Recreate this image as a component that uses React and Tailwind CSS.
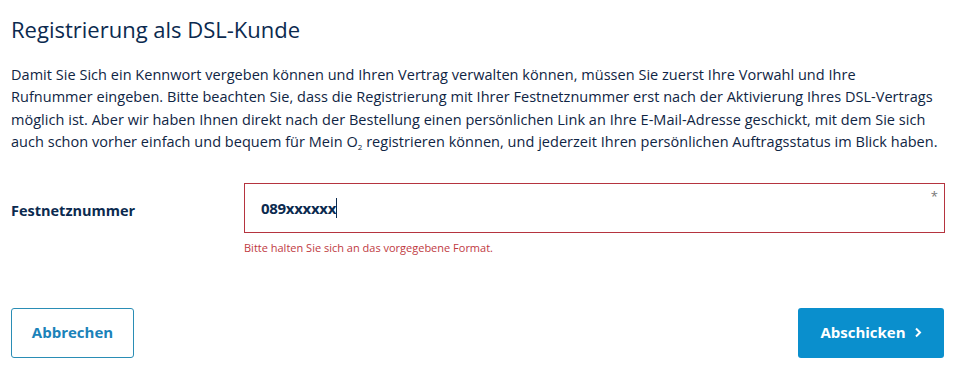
export default function App() {
  return (
    <div className="w-[964px] h-[385px] bg-white px-[11px] pt-[14px]" style={{ fontFamily: '"Open Sans", "Noto Sans", sans-serif' }}>
      <h1 className="text-[22px] leading-[30px] text-[#0b2a4f] font-normal">Registrierung als DSL-Kunde</h1>
      <p className="mt-[20px] text-[14.5px] leading-[22.3px] text-[#0f2544] tracking-[0.03px] pr-[0px]">
        Damit Sie Sich ein Kennwort vergeben können und Ihren Vertrag verwalten können, müssen Sie zuerst Ihre Vorwahl und Ihre<br />
        Rufnummer eingeben. Bitte beachten Sie, dass die Registrierung mit Ihrer Festnetznummer erst nach der Aktivierung Ihres DSL-Vertrags<br />
        möglich ist. Aber wir haben Ihnen direkt nach der Bestellung einen persönlichen Link an Ihre E-Mail-Adresse geschickt, mit dem Sie sich<br />
        auch schon vorher einfach und bequem für Mein O<sub className="text-[8px] align-baseline relative top-[3px]">2</sub> registrieren können, und jederzeit Ihren persönlichen Auftragsstatus im Blick haben.
      </p>
      <div className="mt-[30px] flex items-start">
        <div className="w-[233px] shrink-0 pt-[17px] text-[14.5px] font-bold text-[#0b2a4f]">Festnetznummer</div>
        <div className="w-[701px]">
          <div className="relative h-[50px] border border-[#b5343f] flex items-center pl-[16px]">
            <span className="text-[15px] font-bold text-[#0b2a4f] tracking-[-0.3px]">089xxxxxx</span>
            <span className="w-px h-[20px] bg-[#0b2a4f]"></span>
            <span className="absolute right-[6px] top-[3px] text-[13px] text-[#777]">*</span>
          </div>
          <div className="mt-[7px] text-[11px] text-[#c03a3f]">Bitte halten Sie sich an das vorgegebene Format.</div>
        </div>
      </div>
      <div className="mt-[51px] flex justify-between pr-[9px]">
        <button className="w-[123px] h-[50px] border border-[#2a8db5] rounded-[3px] text-[15px] font-bold text-[#1b82b9]">Abbrechen</button>
        <button className="w-[146px] h-[50px] bg-[#0a8fcd] rounded-[3px] text-[15px] font-bold text-white flex items-center justify-center gap-[8px]">
          Abschicken
          <svg width="8" height="11" viewBox="0 0 8 11" fill="none"><path d="M2 1.5 L6 5.5 L2 9.5" stroke="white" strokeWidth="2" /></svg>
        </button>
      </div>
    </div>
  );
}
